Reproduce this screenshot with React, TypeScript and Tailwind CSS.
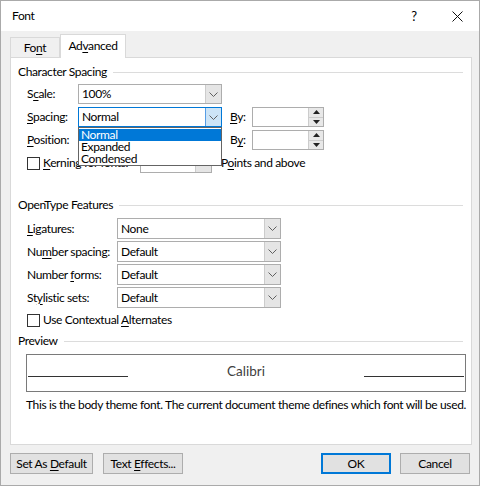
import React from 'react';

const FONT = { fontFamily: 'Lato, "Noto Sans", sans-serif' };

function U({ children }: { children: React.ReactNode }) {
  return <span className="underline underline-offset-[2px] decoration-[1px]">{children}</span>;
}

function Chevron({ color = '#606060' }: { color?: string }) {
  return (
    <svg width="9" height="5" viewBox="0 0 9 5">
      <path d="M0.5 0.5 L4.5 4.5 L8.5 0.5" fill="none" stroke={color} strokeWidth="1" />
    </svg>
  );
}

function Combo({ value, width, hot }: { value?: string; width: string; hot?: boolean }) {
  return (
    <div
      className={`flex h-full bg-white border ${width} ${hot ? 'border-[#0078d7]' : 'border-[#adadad]'}`}
    >
      <div className="flex flex-1 items-center pl-[3px] text-black">{value}</div>
      <div
        className={
          hot
            ? 'flex w-[16px] items-center justify-center bg-[#cce4f7] border-l border-[#569de5]'
            : 'flex w-[16px] items-center justify-center bg-[#e5e5e5] border-l border-[#cccccc]'
        }
      >
        <Chevron />
      </div>
    </div>
  );
}

function Spin() {
  return (
    <div className="flex h-full w-[72px] border border-[#adadad] bg-white">
      <div className="flex-1" />
      <div className="flex w-[15px] flex-col bg-[#e8e8e8] border-l border-[#cccccc]">
        <div className="flex flex-1 items-center justify-center border-b border-[#cccccc]">
          <svg width="7" height="4" viewBox="0 0 7 4"><path d="M0 4 L3.5 0 L7 4 Z" fill="#222" /></svg>
        </div>
        <div className="flex flex-1 items-center justify-center">
          <svg width="7" height="4" viewBox="0 0 7 4"><path d="M0 0 L3.5 4 L7 0 Z" fill="#222" /></svg>
        </div>
      </div>
    </div>
  );
}

function Checkbox() {
  return <div className="h-[13px] w-[13px] shrink-0 border border-[#333333] bg-white" />;
}

function GroupHeader({ title, mt }: { title: string; mt: string }) {
  return (
    <div className={`flex h-[16px] items-center ${mt}`}>
      <span className="text-black">{title}</span>
      <div className="ml-[6px] mr-[1px] flex-1 border-t border-[#dcdcdc]" />
    </div>
  );
}

function Button({ children, width, primary }: { children: React.ReactNode; width: string; primary?: boolean }) {
  return (
    <div
      className={`flex h-[21px] items-center justify-center bg-[#e1e1e1] text-black ${width} ${
        primary ? 'border-2 border-[#0078d7]' : 'border border-[#adadad]'
      }`}
    >
      <span className="whitespace-pre">{children}</span>
    </div>
  );
}

const OPENTYPE_ROWS: { label: React.ReactNode; value: string }[] = [
  { label: <><U>L</U>igatures:</>, value: 'None' },
  { label: <>Nu<U>m</U>ber spacing:</>, value: 'Default' },
  { label: <>Number <U>f</U>orms:</>, value: 'Default' },
  { label: <>St<U>y</U>listic sets:</>, value: 'Default' },
];

export default function App() {
  return (
    <div
      className="flex h-[486px] w-[480px] flex-col overflow-hidden whitespace-nowrap border border-[#aaaaaa] bg-[#f0f0f0] text-[12px] leading-[16px] tracking-[-0.36px]"
      style={FONT}
    >
      {/* title bar */}
      <div className="flex h-[30px] items-center bg-white">
        <span className="pl-[11px] text-[12px] text-black">Font</span>
        <div className="ml-auto flex h-full">
          <div className="flex w-[42px] items-center justify-center text-[13px] text-black">?</div>
          <div className="flex w-[44px] items-center justify-center">
            <svg width="11" height="11" viewBox="0 0 11 11">
              <path d="M0.5 0.5 L10.5 10.5 M10.5 0.5 L0.5 10.5" stroke="#111" strokeWidth="1" />
            </svg>
          </div>
        </div>
      </div>

      <div className="flex flex-1 flex-col px-[9px]">
        {/* tabs */}
        <div className="flex h-[26px] items-end">
          <div className="flex h-[20px] w-[50px] items-center justify-center border border-b-0 border-[#d9d9d9] text-black">
            <span>Fo<U>n</U>t</span>
          </div>
          <div className="relative z-10 -mb-px flex h-[24px] w-[66px] items-center justify-center border border-b-0 border-[#d9d9d9] bg-white pb-[2px] text-black">
            <span>Ad<U>v</U>anced</span>
          </div>
        </div>

        {/* panel */}
        <div className="relative flex h-[388px] w-[462px] flex-col border border-[#d9d9d9] bg-white px-[7px]">
          <GroupHeader title="Character Spacing" mt="mt-[6px]" />

          <div className="mt-[4px] flex h-[20px] items-center pl-[9px]">
            <span className="w-[51px]">S<U>c</U>ale:</span>
            <Combo value="100%" width="w-[144px]" />
          </div>

          <div className="mt-[3px] flex h-[20px] items-center pl-[9px]">
            <span className="w-[51px]"><U>S</U>pacing:</span>
            <Combo value="Normal" width="w-[144px]" hot />
            <span className="ml-[8px] w-[22px]"><U>B</U>y:</span>
            <Spin />
          </div>

          <div className="mt-[3px] flex h-[20px] items-center pl-[9px]">
            <span className="w-[51px]"><U>P</U>osition:</span>
            <Combo value="" width="w-[144px]" />
            <span className="ml-[8px] w-[22px]">B<U>y</U>:</span>
            <Spin />
          </div>

          <div className="mt-[3px] flex h-[20px] items-center pl-[9px]">
            <Checkbox />
            <span className="ml-[3px] w-[97px]"><U>K</U>erning for fonts:</span>
            <div className="h-full">
              <Combo value="" width="w-[72px]" />
            </div>
            <span className="ml-[9px]">P<U>o</U>ints and above</span>
          </div>

          <GroupHeader title="OpenType Features" mt="mt-[24px]" />

          <div className="mt-[5px] flex flex-col gap-[2px] pl-[9px]">
            {OPENTYPE_ROWS.map((row, i) => (
              <div key={i} className="flex h-[21px] items-center">
                <span className="w-[90px]">{row.label}</span>
                <Combo value={row.value} width="w-[164px]" />
              </div>
            ))}
          </div>

          <div className="mt-[4px] flex h-[16px] items-center pl-[9px]">
            <Checkbox />
            <span className="ml-[3px]">Use Contextual <U>A</U>lternates</span>
          </div>

          <GroupHeader title="Preview" mt="mt-[5px]" />

          <div className="ml-[8px] mt-[5px] flex h-[38px] w-[440px] items-end border border-[#7a7a7a] px-[1px] pb-[14px]">
            <div className="w-[100px] border-t border-[#333333]" />
            <div className="mb-[-4px] flex-1 text-center text-[13.5px] leading-[20px] tracking-normal text-[#404040]">
              Calibri
            </div>
            <div className="w-[100px] border-t border-[#333333]" />
          </div>

          <div className="ml-[8px] mt-[5px] h-[16px] text-black">
            This is the body theme font. The current document theme defines which font will be used.
          </div>

          {/* open list of the Spacing combo */}
          <div className="absolute left-[67px] top-[69px] z-20 flex h-[39px] w-[144px] flex-col border border-[#646464] bg-white py-px leading-[12px]">
            <div className="flex h-[12px] items-center bg-[#0078d7] px-[2px] text-white">Normal</div>
            <div className="flex h-[12px] items-center px-[2px] text-black">Expanded</div>
            <div className="flex h-[12px] items-center px-[2px] text-black">Condensed</div>
          </div>
        </div>

        {/* buttons */}
        <div className="mt-[8px] flex">
          <Button width="w-[83px]">Set As <U>D</U>efault</Button>
          <div className="ml-[10px]">
            <Button width="w-[80px]">Text <U>E</U>ffects...</Button>
          </div>
          <div className="ml-auto flex gap-[9px]">
            <Button width="w-[70px]" primary>OK</Button>
            <Button width="w-[70px]">Cancel</Button>
          </div>
        </div>
      </div>
    </div>
  );
}
